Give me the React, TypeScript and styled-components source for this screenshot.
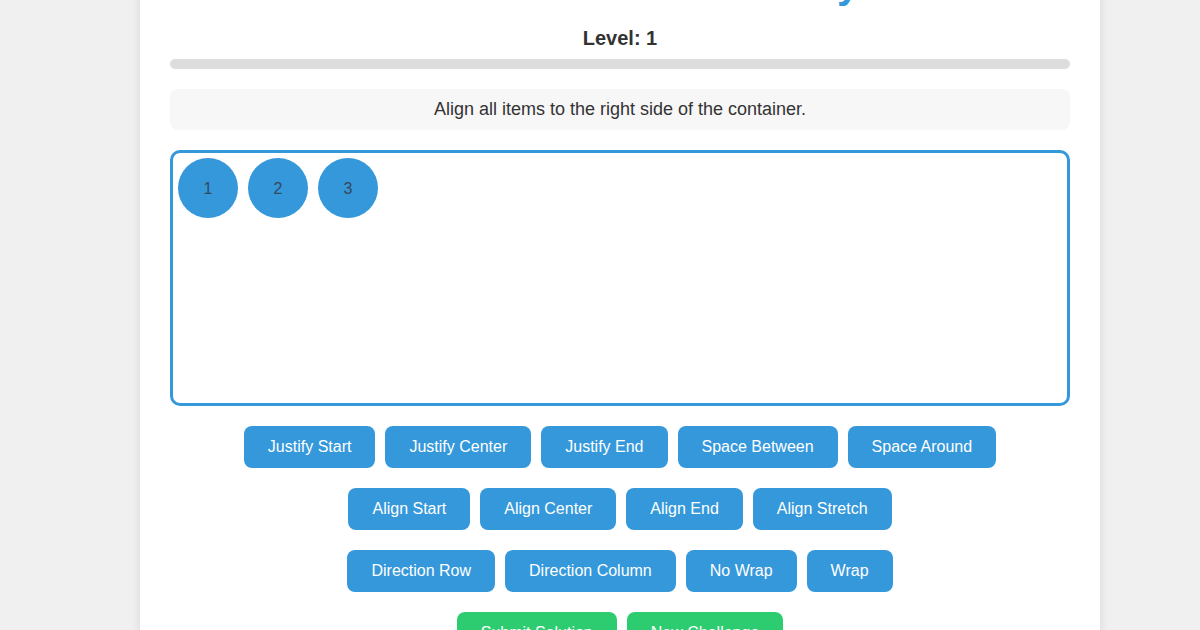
import React, { useState } from "react";
import styled, { createGlobalStyle } from "styled-components";

const GlobalStyle = createGlobalStyle`
  * {
    box-sizing: border-box;
  }
  html {
    margin: 0;
    padding: 0;
  }
  body {
    box-sizing: content-box;
    width: 100vw;
    height: 100vh;
    margin: 0;
    padding: 0 20px;
    display: flex;
    justify-content: center;
    align-items: center;
    background: #f0f0f0;
    font-family: "Liberation Sans", Arial, sans-serif;
    color: #333;
  }
  #root {
    width: 100%;
    display: flex;
    justify-content: center;
  }
`;

const Card = styled.div`
  width: 960px;
  padding: 30px;
  background: #fff;
  box-shadow: 0 0 10px rgba(0, 0, 0, 0.1);
  text-align: center;
`;

const Title = styled.h1`
  margin: 0 0 20px;
  font-size: 40px;
  color: #3498db;
`;

const Level = styled.div`
  font-size: 20px;
  font-weight: bold;
  margin-bottom: 9px;
`;

const ProgressTrack = styled.div`
  height: 10px;
  border-radius: 5px;
  background: #ddd;
  overflow: hidden;
  margin-bottom: 20px;
`;

const ProgressFill = styled.div`
  height: 100%;
  background: #2ecc71;
`;

const Instruction = styled.div`
  padding: 10px;
  border-radius: 8px;
  background: #f7f7f7;
  font-size: 18px;
  margin-bottom: 20px;
`;

const GameArea = styled.div<{ $justify: string; $align: string; $direction: string; $wrap: string }>`
  display: flex;
  justify-content: ${(p) => p.$justify};
  align-items: ${(p) => p.$align};
  flex-direction: ${(p) => p.$direction};
  flex-wrap: ${(p) => p.$wrap};
  height: 256px;
  border: 3px solid #3498db;
  border-radius: 10px;
  margin-bottom: 20px;
`;

const Item = styled.div`
  width: 60px;
  height: 60px;
  margin: 5px;
  padding-top: 2px;
  border-radius: 50%;
  background: #3498db;
  color: #34495e;
  font-size: 16px;
  display: flex;
  align-items: center;
  justify-content: center;
`;

const Controls = styled.div`
  display: flex;
  flex-direction: column;
  gap: 20px;
  margin-bottom: 15px;
`;

const ButtonRow = styled.div`
  display: flex;
  flex-wrap: wrap;
  justify-content: center;
  gap: 10px;
`;

const Button = styled.button<{ $variant?: "action" }>`
  padding: 12px 24px;
  border: none;
  border-radius: 8px;
  background: ${(p) => (p.$variant === "action" ? "#2ecc71" : "#3498db")};
  color: #fff;
  font-family: "Liberation Sans", Arial, sans-serif;
  font-size: 16px;
  line-height: 18px;
  cursor: pointer;
`;

const justifyOptions = [
  ["Justify Start", "flex-start"],
  ["Justify Center", "center"],
  ["Justify End", "flex-end"],
  ["Space Between", "space-between"],
  ["Space Around", "space-around"],
];

const alignOptions = [
  ["Align Start", "flex-start"],
  ["Align Center", "center"],
  ["Align End", "flex-end"],
  ["Align Stretch", "stretch"],
];

export default function App() {
  const [justify, setJustify] = useState("flex-start");
  const [align, setAlign] = useState("flex-start");
  const [direction, setDirection] = useState("row");
  const [wrap, setWrap] = useState("nowrap");
  const level = 1;

  return (
    <>
      <GlobalStyle />
      <Card>
        <Title>Flexbox Master Academy</Title>
        <Level>Level: {level}</Level>
        <ProgressTrack>
          <ProgressFill style={{ width: `${(level - 1) * 10}%` }} />
        </ProgressTrack>
        <Instruction>Align all items to the right side of the container.</Instruction>
        <GameArea $justify={justify} $align={align} $direction={direction} $wrap={wrap}>
          {[1, 2, 3].map((n) => (
            <Item key={n}>{n}</Item>
          ))}
        </GameArea>
        <Controls>
          <ButtonRow>
            {justifyOptions.map(([label, value]) => (
              <Button key={label} onClick={() => setJustify(value)}>
                {label}
              </Button>
            ))}
          </ButtonRow>
          <ButtonRow>
            {alignOptions.map(([label, value]) => (
              <Button key={label} onClick={() => setAlign(value)}>
                {label}
              </Button>
            ))}
          </ButtonRow>
          <ButtonRow>
            <Button onClick={() => setDirection("row")}>Direction Row</Button>
            <Button onClick={() => setDirection("column")}>Direction Column</Button>
            <Button onClick={() => setWrap("nowrap")}>No Wrap</Button>
            <Button onClick={() => setWrap("wrap")}>Wrap</Button>
          </ButtonRow>
          <ButtonRow>
            <Button $variant="action">Submit Solution</Button>
            <Button $variant="action">New Challenge</Button>
          </ButtonRow>
        </Controls>
      </Card>
    </>
  );
}
